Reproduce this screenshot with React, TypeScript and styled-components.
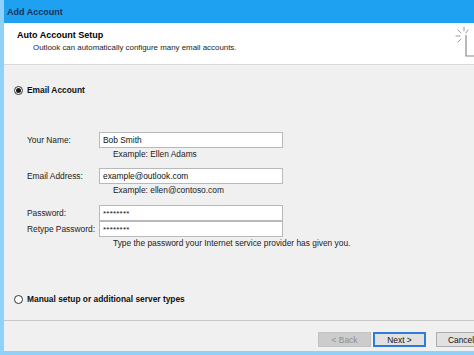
import styled, { createGlobalStyle } from "styled-components";

const GlobalStyle = createGlobalStyle`
  html, body {
    margin: 0;
    padding: 0;
    background: #ffffff;
    overflow: hidden;
  }
  body {
    font-family: "Liberation Sans", Arial, sans-serif;
    font-size: 8.4px;
    color: #1a1a1a;
  }
`;

const Window = styled.div`
  width: 492px;
  height: 355px;
  display: flex;
  flex-direction: column;
  box-sizing: border-box;
  border-left: 4px solid #8fd1f8;
  border-bottom: 4px solid #8fd1f8;
  background: #f0f0f0;
  overflow: hidden;
`;

const TitleBar = styled.div`
  height: 23px;
  margin-left: -4px;
  padding-left: 7px;
  display: flex;
  align-items: center;
  background: #1fa1f1;
  color: #14335c;
  font-weight: 700;
  font-size: 9px;
  flex-shrink: 0;
`;

const Header = styled.div`
  height: 42px;
  box-sizing: border-box;
  background: #ffffff;
  border-bottom: 1px solid #d9d9d9;
  padding: 7px 0 0 13px;
  display: flex;
  justify-content: space-between;
  flex-shrink: 0;
`;

const HeaderText = styled.div`
  display: flex;
  flex-direction: column;
  gap: 1px;
`;

const HeaderTitle = styled.div`
  font-weight: 700;
  font-size: 9px;
  color: #000;
  line-height: 11px;
`;

const HeaderSub = styled.div`
  padding-left: 16px;
  line-height: 12px;
  font-size: 7.9px;
  color: #222;
`;

const HeaderIcon = styled.svg`
  width: 40px;
  height: 34px;
  margin-top: -4px;
  flex-shrink: 0;
`;

const Body = styled.div`
  flex: 1;
  display: flex;
  flex-direction: column;
  padding: 19px 0 0 10px;
`;

const RadioRow = styled.label<{ $top?: number }>`
  display: flex;
  align-items: center;
  gap: 4px;
  height: 12px;
  font-weight: 700;
  color: #111;
  margin-top: ${(p) => p.$top ?? 0}px;
`;

const RadioCircle = styled.span<{ $checked?: boolean }>`
  width: 9px;
  height: 9px;
  box-sizing: border-box;
  border: 1px solid #333;
  border-radius: 50%;
  background: #fff;
  display: flex;
  align-items: center;
  justify-content: center;
  &::after {
    content: "";
    width: 5px;
    height: 5px;
    border-radius: 50%;
    background: ${(p) => (p.$checked ? "#1a1a1a" : "transparent")};
  }
`;

const Form = styled.div`
  display: flex;
  flex-direction: column;
  margin: 36px 0 0 13px;
`;

const FieldRow = styled.div`
  display: grid;
  grid-template-columns: 72px 184px;
  align-items: center;
  height: 16px;
`;

const FieldLabel = styled.span`
  color: #222;
`;

const Input = styled.div<{ $secret?: boolean }>`
  height: 16px;
  box-sizing: border-box;
  border: 1px solid #b9b9b9;
  background: #fff;
  display: flex;
  align-items: center;
  padding-left: 3px;
  color: #111;
  font-size: ${(p) => (p.$secret ? "8px" : "8.4px")};
  letter-spacing: ${(p) => (p.$secret ? "0.2px" : "0")};
`;

const Hint = styled.div<{ $gap: number }>`
  padding-left: 86px;
  line-height: 13px;
  margin-bottom: ${(p) => p.$gap}px;
  color: #222;
`;

const Footer = styled.div`
  height: 31px;
  box-sizing: border-box;
  border-top: 1px solid #c8c8c8;
  display: flex;
  align-items: flex-start;
  padding: 11px 0 0 314px;
  flex-shrink: 0;
`;

const Button = styled.div<{ $variant?: "disabled" | "default" | "cancel" }>`
  width: ${(p) => (p.$variant === "cancel" ? "50px" : "53px")};
  height: 15px;
  flex-shrink: 0;
  box-sizing: border-box;
  display: flex;
  align-items: center;
  justify-content: center;
  margin-right: ${(p) => (p.$variant === "disabled" ? "2px" : "10px")};
  background: ${(p) => (p.$variant === "disabled" ? "#cccccc" : "#e1e1e1")};
  border: ${(p) =>
    p.$variant === "default"
      ? "2px solid #2f7bd6"
      : p.$variant === "disabled"
      ? "1px solid #c2c2c2"
      : "1px solid #adadad"};
  color: ${(p) => (p.$variant === "disabled" ? "#8d8d8d" : "#111")};
`;

export default function App() {
  return (
    <>
      <GlobalStyle />
      <Window>
        <TitleBar>Add Account</TitleBar>
        <Header>
          <HeaderText>
            <HeaderTitle>Auto Account Setup</HeaderTitle>
            <HeaderSub>Outlook can automatically configure many email accounts.</HeaderSub>
          </HeaderText>
          <HeaderIcon viewBox="0 0 40 34">
            <g stroke="#9a9a9a" strokeWidth="1" strokeLinecap="round">
              <line x1="12" y1="1" x2="12" y2="5" />
              <line x1="6" y1="4" x2="9" y2="7" />
              <line x1="4" y1="10" x2="8" y2="10" />
              <line x1="6" y1="16" x2="9" y2="13" />
              <line x1="16" y1="4" x2="14" y2="7" />
            </g>
            <path d="M14 9 L14 30 L24 30" stroke="#8a8a8a" strokeWidth="1.2" fill="none" />
          </HeaderIcon>
        </Header>
        <Body>
          <RadioRow>
            <RadioCircle $checked />
            Email Account
          </RadioRow>
          <Form>
            <FieldRow>
              <FieldLabel>Your Name:</FieldLabel>
              <Input>Bob Smith</Input>
            </FieldRow>
            <Hint $gap={7}>Example: Ellen Adams</Hint>
            <FieldRow>
              <FieldLabel>Email Address:</FieldLabel>
              <Input>example@outlook.com</Input>
            </FieldRow>
            <Hint $gap={8}>Example: ellen@contoso.com</Hint>
            <FieldRow>
              <FieldLabel>Password:</FieldLabel>
              <Input $secret>********</Input>
            </FieldRow>
            <FieldRow>
              <FieldLabel>Retype Password:</FieldLabel>
              <Input $secret>********</Input>
            </FieldRow>
            <Hint $gap={0}>Type the password your Internet service provider has given you.</Hint>
          </Form>
          <RadioRow $top={43}>
            <RadioCircle />
            Manual setup or additional server types
          </RadioRow>
        </Body>
        <Footer>
          <Button $variant="disabled">&lt; Back</Button>
          <Button $variant="default">Next &gt;</Button>
          <Button $variant="cancel">Cancel</Button>
        </Footer>
      </Window>
    </>
  );
}
